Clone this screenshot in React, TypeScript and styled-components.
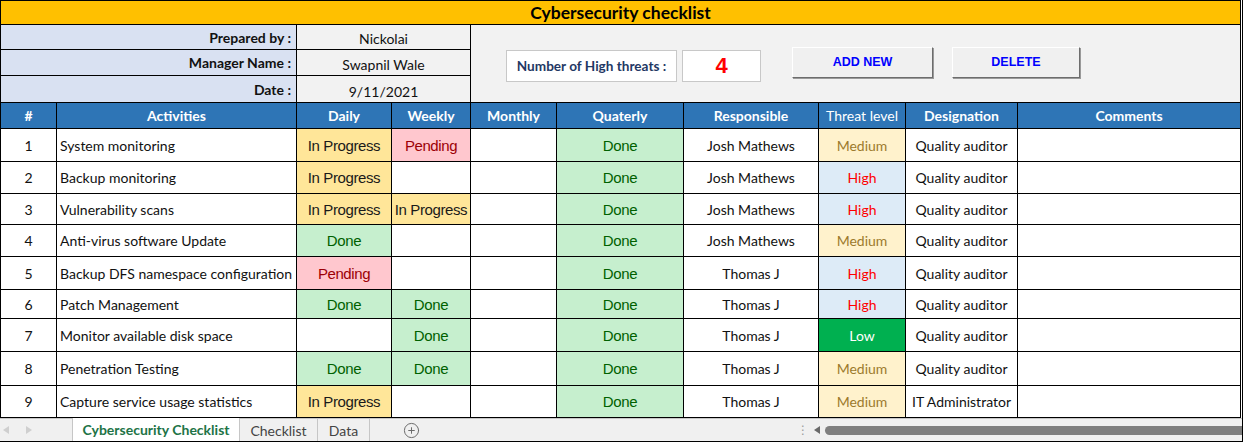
import React from "react";
import styled, { createGlobalStyle } from "styled-components";
import { CirclePlus } from "lucide-react";

type Status = "In Progress" | "Pending" | "Done" | "";
type Level = "High" | "Medium" | "Low";

type Activity = {
  id: number;
  name: string;
  daily: Status;
  weekly: Status;
  monthly: Status;
  quarterly: Status;
  owner: string;
  threat: Level;
  designation: string;
};

const activities: Activity[] = [
  { id: 1, name: "System monitoring", daily: "In Progress", weekly: "Pending", monthly: "", quarterly: "Done", owner: "Josh Mathews", threat: "Medium", designation: "Quality auditor" },
  { id: 2, name: "Backup monitoring", daily: "In Progress", weekly: "", monthly: "", quarterly: "Done", owner: "Josh Mathews", threat: "High", designation: "Quality auditor" },
  { id: 3, name: "Vulnerability scans", daily: "In Progress", weekly: "In Progress", monthly: "", quarterly: "Done", owner: "Josh Mathews", threat: "High", designation: "Quality auditor" },
  { id: 4, name: "Anti-virus software Update", daily: "Done", weekly: "", monthly: "", quarterly: "Done", owner: "Josh Mathews", threat: "Medium", designation: "Quality auditor" },
  { id: 5, name: "Backup DFS namespace configuration", daily: "Pending", weekly: "", monthly: "", quarterly: "Done", owner: "Thomas J", threat: "High", designation: "Quality auditor" },
  { id: 6, name: "Patch Management", daily: "Done", weekly: "Done", monthly: "", quarterly: "Done", owner: "Thomas J", threat: "High", designation: "Quality auditor" },
  { id: 7, name: "Monitor available disk space", daily: "", weekly: "Done", monthly: "", quarterly: "Done", owner: "Thomas J", threat: "Low", designation: "Quality auditor" },
  { id: 8, name: "Penetration Testing", daily: "Done", weekly: "Done", monthly: "", quarterly: "Done", owner: "Thomas J", threat: "Medium", designation: "Quality auditor" },
  { id: 9, name: "Capture service usage statistics", daily: "In Progress", weekly: "", monthly: "", quarterly: "Done", owner: "Thomas J", threat: "Medium", designation: "IT Administrator" }
];

const columns = [
  "#",
  "Activities",
  "Daily",
  "Weekly",
  "Monthly",
  "Quaterly",
  "Responsible",
  "Threat level",
  "Designation",
  "Comments"
];

const statusTones: Record<string, { bg: string; fg: string }> = {
  "In Progress": { bg: "#ffe699", fg: "#1a1a1a" },
  Pending: { bg: "#ffc7ce", fg: "#9c0006" },
  Done: { bg: "#c6efce", fg: "#006100" },
  "": { bg: "#ffffff", fg: "#000000" }
};

const levelTones: Record<Level, { bg: string; fg: string }> = {
  High: { bg: "#ddebf7", fg: "#ff0000" },
  Medium: { bg: "#fff2cc", fg: "#9c7a2c" },
  Low: { bg: "#00b050", fg: "#ffffff" }
};

const calibri = `Lato, "Open Sans", sans-serif`;

const GlobalStyle = createGlobalStyle`
  html, body {
    margin: 0;
    padding: 0;
    background: #ffffff;
  }
  body {
    font-family: ${calibri};
  }
`;

const Page = styled.div`
  width: 1243px;
  height: 442px;
  box-sizing: border-box;
  border-right: 1px solid #000;
  border-bottom: 1px solid #000;
  display: flex;
  flex-direction: column;
  overflow: hidden;
`;

const Sheet = styled.div`
  width: 1241px;
  box-sizing: border-box;
  display: grid;
  grid-template-columns: 55px 239px 94px 78px 85px 126px 134px 86px 111px 222px;
  grid-template-rows: 23px 24px 25px 26px 25px 32px 31px 30px 31px 32px 28px 32px 33px 31px;
  gap: 1px;
  padding: 1px;
  background: #000;
`;

const TitleCell = styled.div`
  grid-column: 1 / -1;
  background: #ffc000;
  color: #000;
  font-weight: 700;
  font-size: 17.5px;
  display: flex;
  align-items: center;
  justify-content: center;
`;

const LabelCell = styled.div`
  grid-column: 1 / span 2;
  background: #d9e1f2;
  font-weight: 700;
  font-size: 14px;
  color: #111;
  display: flex;
  align-items: center;
  justify-content: flex-end;
  padding-right: 5px;
`;

const ValueCell = styled.div`
  grid-column: 3 / span 2;
  background: #f2f2f2;
  font-size: 14px;
  color: #111;
  display: flex;
  align-items: flex-end;
  justify-content: center;
  padding-bottom: 2px;
`;

const ControlPanel = styled.div`
  grid-column: 5 / -1;
  grid-row: 2 / span 3;
  background: #f2f2f2;
  display: flex;
  align-items: center;
  padding-left: 35px;
`;

const Counter = styled.div`
  display: flex;
  gap: 5px;
  margin-top: 5px;
`;

const CounterLabel = styled.div`
  width: 171px;
  height: 32px;
  box-sizing: border-box;
  border: 1px solid #c8c8c8;
  background: #fff;
  color: #1f3864;
  font-weight: 700;
  font-size: 13.6px;
  display: flex;
  align-items: center;
  justify-content: center;
`;

const CounterValue = styled.div`
  width: 79px;
  height: 32px;
  box-sizing: border-box;
  border: 1px solid #c8c8c8;
  background: #fff;
  color: #ff0000;
  font-family: "Liberation Sans", Arial, sans-serif;
  font-weight: 700;
  font-size: 22px;
  display: flex;
  align-items: center;
  justify-content: center;
`;

const ActionButton = styled.button<{ $width: number; $gap: number }>`
  width: ${(p) => p.$width}px;
  height: 31px;
  margin-left: ${(p) => p.$gap}px;
  margin-top: -3px;
  box-sizing: border-box;
  background: #f0f0f0;
  border: 1px solid;
  border-color: #ffffff #6d6d6d #6d6d6d #ffffff;
  box-shadow: 1px 1px 0 #9a9a9a;
  color: #0000ff;
  font-family: "Liberation Sans", Arial, sans-serif;
  font-weight: 700;
  font-size: 12.5px;
  padding: 0;
`;

const HeadCell = styled.div<{ $plain?: boolean }>`
  background: #2e75b6;
  color: #fff;
  font-weight: ${(p) => (p.$plain ? 400 : 700)};
  font-size: 14px;
  display: flex;
  align-items: center;
  justify-content: center;
`;

const Cell = styled.div<{ $align?: "left" | "center" }>`
  background: #fff;
  color: #111;
  font-size: 14px;
  display: flex;
  align-items: center;
  justify-content: ${(p) => (p.$align === "left" ? "flex-start" : "center")};
  padding-left: ${(p) => (p.$align === "left" ? "3px" : "0")};
  white-space: nowrap;
  overflow: hidden;
`;

const StatusCell = styled.div<{ $status: Status }>`
  background: ${(p) => statusTones[p.$status].bg};
  color: ${(p) => statusTones[p.$status].fg};
  font-family: "Liberation Sans", Arial, sans-serif;
  font-size: 15px;
  display: flex;
  align-items: center;
  justify-content: center;
  white-space: nowrap;
  overflow: hidden;
  letter-spacing: -0.4px;
`;

const LevelCell = styled.div<{ $level: Level }>`
  background: ${(p) => levelTones[p.$level].bg};
  color: ${(p) => levelTones[p.$level].fg};
  font-size: 14px;
  display: flex;
  align-items: center;
  justify-content: center;
`;

const TabBar = styled.div`
  flex: 1;
  display: flex;
  align-items: stretch;
  background: #f0f0f0;
  border-top: 1px solid #c6c6c6;
`;

const NavArrows = styled.div`
  width: 73px;
  display: flex;
  align-items: center;
  gap: 17px;
  padding-left: 3px;
  box-sizing: border-box;
  border-right: 1px solid #c6c6c6;
`;

const SheetTab = styled.div<{ $active?: boolean; $width: number }>`
  width: ${(p) => p.$width}px;
  box-sizing: border-box;
  margin-top: ${(p) => (p.$active ? "-1px" : "0")};
  background: ${(p) => (p.$active ? "#ffffff" : "#f0f0f0")};
  color: ${(p) => (p.$active ? "#217346" : "#444")};
  font-weight: ${(p) => (p.$active ? 700 : 400)};
  font-size: 14px;
  border-right: 1px solid #c6c6c6;
  display: flex;
  align-items: center;
  justify-content: center;
`;

const AddSheet = styled.div`
  width: 82px;
  display: flex;
  align-items: center;
  justify-content: center;
  color: #6a6a6a;
`;

const Spacer = styled.div`
  flex: 1;
`;

const ScrollDots = styled.div`
  width: 16px;
  display: flex;
  align-items: center;
  justify-content: center;
  color: #9a9a9a;
  font-size: 12px;
  font-family: "DejaVu Sans", sans-serif;
`;

const ScrollTrack = styled.div`
  width: 431px;
  display: flex;
  align-items: center;
  gap: 5px;
  padding-left: 3px;
  box-sizing: border-box;
`;

const ScrollThumb = styled.div`
  flex: 1;
  height: 9px;
  background: #7f7f7f;
  border-radius: 5px 0 0 5px;
`;

const Triangle = ({ dir, color }: { dir: "left" | "right"; color: string }) => (
  <svg width="6" height="8" viewBox="0 0 6 8">
    <path d={dir === "left" ? "M6 0 L0 4 L6 8 Z" : "M0 0 L6 4 L0 8 Z"} fill={color} />
  </svg>
);

const infoRows = [
  { label: "Prepared by :", value: "Nickolai" },
  { label: "Manager Name :", value: "Swapnil Wale" },
  { label: "Date :", value: "9/11/2021" }
];

export default function App() {
  return (
    <>
      <GlobalStyle />
      <Page>
        <Sheet>
          <TitleCell>Cybersecurity checklist</TitleCell>

          <ControlPanel>
            <Counter>
              <CounterLabel>Number of High threats :</CounterLabel>
              <CounterValue>4</CounterValue>
            </Counter>
            <ActionButton $width={141} $gap={31}>ADD NEW</ActionButton>
            <ActionButton $width={128} $gap={19}>DELETE</ActionButton>
          </ControlPanel>

          {infoRows.map((row) => (
            <React.Fragment key={row.label}>
              <LabelCell>{row.label}</LabelCell>
              <ValueCell>{row.value}</ValueCell>
            </React.Fragment>
          ))}

          {columns.map((col) => (
            <HeadCell key={col} $plain={col === "Threat level"}>
              {col}
            </HeadCell>
          ))}

          {activities.map((a) => (
            <React.Fragment key={a.id}>
              <Cell>{a.id}</Cell>
              <Cell $align="left">{a.name}</Cell>
              <StatusCell $status={a.daily}>{a.daily}</StatusCell>
              <StatusCell $status={a.weekly}>{a.weekly}</StatusCell>
              <StatusCell $status={a.monthly}>{a.monthly}</StatusCell>
              <StatusCell $status={a.quarterly}>{a.quarterly}</StatusCell>
              <Cell>{a.owner}</Cell>
              <LevelCell $level={a.threat}>{a.threat}</LevelCell>
              <Cell>{a.designation}</Cell>
              <Cell />
            </React.Fragment>
          ))}
        </Sheet>

        <TabBar>
          <NavArrows>
            <Triangle dir="left" color="#cfcfcf" />
            <Triangle dir="right" color="#cfcfcf" />
          </NavArrows>
          <SheetTab $active $width={167}>Cybersecurity Checklist</SheetTab>
          <SheetTab $width={78}>Checklist</SheetTab>
          <SheetTab $width={52}>Data</SheetTab>
          <AddSheet>
            <CirclePlus size={17} strokeWidth={1.4} />
          </AddSheet>
          <Spacer />
          <ScrollDots>⋮</ScrollDots>
          <ScrollTrack>
            <Triangle dir="left" color="#6a6a6a" />
            <ScrollThumb />
          </ScrollTrack>
        </TabBar>
      </Page>
    </>
  );
}
